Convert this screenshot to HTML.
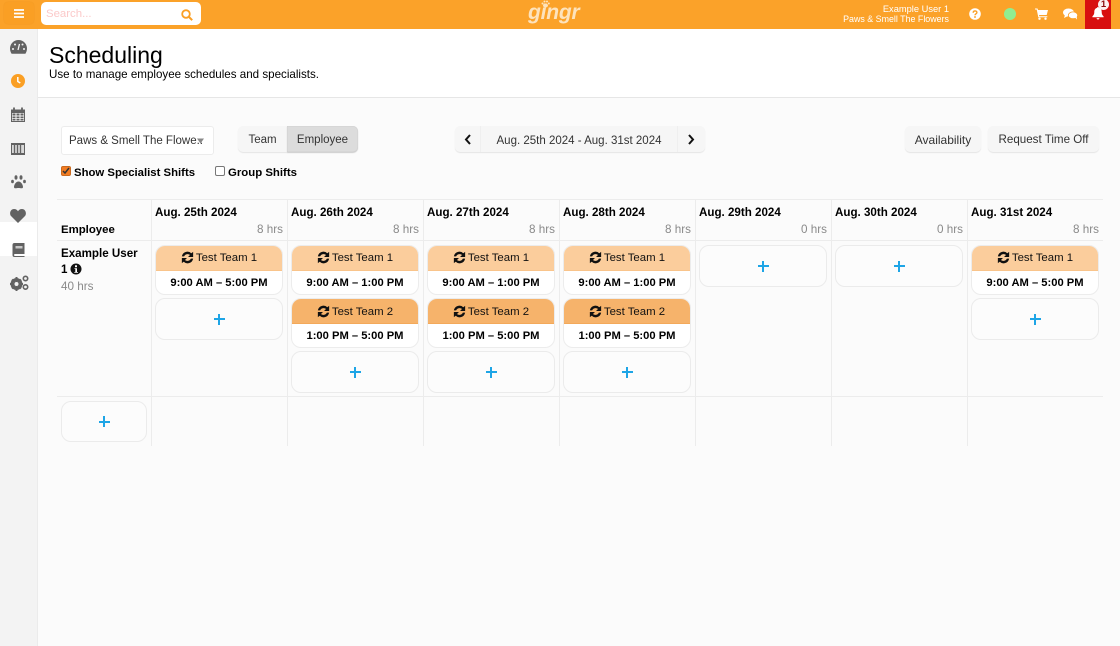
<!DOCTYPE html>
<html><head><meta charset="utf-8"><style>
html,body{margin:0;padding:0}
body{width:1120px;height:646px;overflow:hidden;position:relative;background:#fbfbfb;font-family:"Liberation Sans",sans-serif;color:#000}
.a{position:absolute;white-space:nowrap}
.t{position:absolute;white-space:nowrap;line-height:16px;height:16px;font-size:11.6px}
.b{font-weight:700;font-size:11.6px}
.g{color:#8a8a8a;font-size:11.7px}
.c{text-align:center}
.line{position:absolute;background:#ececec}
.card{position:absolute;width:126px;height:48px;border:1px solid #ececec;border-radius:10px;background:#fff;overflow:hidden;box-sizing:content-box}
.card .h{position:absolute;left:0;top:0;right:0;height:24px;text-align:center;line-height:24px;font-size:11.4px;color:#111}
.h1{background:#fbcd9c;border-bottom:1px solid #f9c48b}
.h2{background:#f6b36b;border-bottom:1px solid #f3a95a}
.h2.h{line-height:26px !important}
.card .h svg{vertical-align:-3px;margin-right:2px}
.card .time{position:absolute;left:0;right:0;top:26px;height:23px;line-height:23px;text-align:center;font-weight:700;font-size:11.2px}
.add{position:absolute;border:1px solid #ebebeb;border-radius:10px;background:#fcfcfc;box-sizing:border-box}
.add:after,.add:before{content:"";position:absolute;background:#1ea5e6;left:50%;top:50%}
.add:before{width:11px;height:2px;margin:-1px 0 0 -5.5px}
.add:after{width:2px;height:11px;margin:-5.5px 0 0 -1px}
.btn{position:absolute;background:#f6f6f6;border-radius:5px;box-shadow:0 1px 1px #e5e5e5;height:26px;line-height:28px;text-align:center;font-size:11.5px;color:#333}
</style></head><body>

<!-- top bar -->
<div class="a" style="left:0;top:0;width:1120px;height:29px;background:#fba229"></div>
<div class="a" style="left:4px;top:2px;width:30px;height:22px;border-radius:4px;background:#fa9f24;box-shadow:0 0 1px #e8921f"></div>
<svg class="a" style="left:14px;top:9px" width="10" height="9"><path d="M0 1h10M0 4.500h10M0 8h10" stroke="#fff" stroke-width="1.700"/></svg>
<div class="a" style="left:41px;top:2px;width:160px;height:23px;background:#fff;border-radius:5px"></div>
<div class="t" style="left:46px;top:6px;color:#fbc9c9;font-size:11.4px">Search...</div>
<svg class="a" style="left:181px;top:9px" width="12" height="12" viewBox="0 0 12 12"><circle cx="5" cy="5" r="3.800" fill="none" stroke="#fa9f24" stroke-width="1.800"/><path d="M8 8l3.200 3.200" stroke="#fa9f24" stroke-width="2"/></svg>

<!-- logo -->
<div class="a" style="left:528px;top:0;font-family:'Liberation Sans',sans-serif;font-style:italic;font-weight:700;font-size:21px;line-height:26px;color:#fde3bd;letter-spacing:-.2px">gingr</div>
<svg class="a" style="left:541px;top:0" width="9" height="8" viewBox="0 0 9 8" fill="#fde3bd"><ellipse cx="4.500" cy="5.500" rx="2.500" ry="2"/><circle cx="1.500" cy="3.500" r="1"/><circle cx="3.500" cy="1.500" r="1"/><circle cx="6" cy="1.500" r="1"/><circle cx="7.800" cy="3.500" r="1"/></svg>

<div class="t" style="right:171px;top:1px;color:#fff;font-size:9.3px">Example User 1</div>
<div class="t" style="right:171px;top:11px;color:#fff;font-size:8.9px">Paws &amp; Smell The Flowers</div>
<svg class="a" style="left:969px;top:8px" width="12" height="12" viewBox="0 0 12 12"><circle cx="6" cy="6" r="5.800" fill="#fff"/><path d="M4.200 4.700c0-2.300 3.700-2.300 3.700-.2 0 1.400-1.900 1.300-1.900 2.800" fill="none" stroke="#fa9f24" stroke-width="1.400"/><rect x="5.200" y="8.200" width="1.600" height="1.600" fill="#fa9f24"/></svg>
<div class="a" style="left:1004px;top:8px;width:12px;height:12px;border-radius:50%;background:#90ee90"></div>
<svg class="a" style="left:1035px;top:8px" width="13" height="12" viewBox="0 0 13 12"><path d="M0 .5h2.500l.5 1.500h10l-1.300 5H4l.3 1.200h8v1H3.300L1.700 1.500H0z" fill="#fff"/><circle cx="4.500" cy="10.700" r="1.200" fill="#fff"/><circle cx="10.500" cy="10.700" r="1.200" fill="#fff"/></svg>
<svg class="a" style="left:1063px;top:8px" width="15" height="12" viewBox="0 0 15 12"><ellipse cx="5.500" cy="4.500" rx="5.500" ry="4" fill="#fff"/><path d="M2 7l-1 3 4-2z" fill="#fff"/><ellipse cx="10" cy="7.300" rx="4.700" ry="3.400" fill="#fff" stroke="#fa9f24" stroke-width=".8"/><path d="M12 9.500l2 2-.3-3.500z" fill="#fff"/></svg>
<div class="a" style="left:1085px;top:0;width:26px;height:29px;background:#d80f0f"></div>
<svg class="a" style="left:1092px;top:7px" width="12" height="13" viewBox="0 0 12 14"><path d="M6 0c.6 0 1 .4 1 1 2.300.5 3 2.500 3 4.500 0 2.500 1 3.500 2 4.500v1H0v-1c1-1 2-2 2-4.500C2 3.500 2.700 1.500 5 1c0-.6.400-1 1-1z" fill="#fff"/><path d="M4.500 12h3a1.500 1.500 0 0 1-3 0z" fill="#fff"/></svg>
<div class="a" style="left:1098px;top:-1px;width:11px;height:11px;border-radius:50%;background:#fbeeee;color:#8a0c0c;font-size:9.500px;font-weight:700;line-height:11px;text-align:center">1</div>

<!-- sidebar -->
<div class="a" style="left:0;top:29px;width:37px;height:617px;background:#f3f3f3;border-right:1px solid #ebebeb"></div>
<div class="a" style="left:0;top:222px;width:37px;height:34px;background:#fff"></div>
<svg class="a" style="left:10px;top:40px" width="17" height="14" viewBox="0 0 17 14"><path d="M8.500 0a8.500 8.500 0 0 1 8.500 8.500c0 2-.7 3.800-1.600 5.200H1.600C.7 12.300 0 10.500 0 8.500A8.500 8.500 0 0 1 8.500 0z" fill="#626262"/><path d="M8 10l1.500-6" stroke="#f3f3f3" stroke-width="1.300"/><g fill="#f3f3f3"><circle cx="3" cy="9" r="1"/><circle cx="5" cy="4.500" r="1"/><circle cx="12.500" cy="4.500" r="1"/><circle cx="14" cy="9" r="1"/></g></svg>
<svg class="a" style="left:11px;top:74px" width="14" height="14" viewBox="0 0 14 14"><circle cx="7" cy="7" r="7" fill="#fa9f24"/><path d="M6.800 3v4.500l2.500 1.500" fill="none" stroke="#fff" stroke-width="1.500"/></svg>
<svg class="a" style="left:11px;top:107px" width="14" height="15" viewBox="0 0 14 15"><path d="M0 2.500h14V15H0z" fill="#626262"/><path d="M3 .5v3M11 .5v3" stroke="#626262" stroke-width="1.800"/><path d="M1 6h12v8H1z" fill="#f3f3f3"/><path d="M1.500 6.500h3v2h-3zM5.500 6.500h3v2h-3zM9.500 6.500h3v2h-3zM1.500 9.500h3v1.800h-3zM5.500 9.500h3v1.800h-3zM9.500 9.500h3v1.800h-3zM1.500 12h3v1.500h-3zM5.500 12h3v1.500h-3zM9.500 12h3v1.500h-3z" fill="#626262"/></svg>
<svg class="a" style="left:11px;top:143px" width="14" height="12" viewBox="0 0 14 12"><rect width="14" height="12" fill="#626262"/><rect x="1" y="2" width="12" height="8" fill="#d8d8d8"/><path d="M3.500 2v8M6.500 2v8M9.500 2v8" stroke="#626262" stroke-width="1.300"/></svg>
<svg class="a" style="left:11px;top:175px" width="15" height="14" viewBox="0 0 15 14" fill="#626262"><path d="M7.500 6.500c2.500 0 4.500 3.300 4.500 5.500 0 2-2.500 1-4.500 1s-4.500 1-4.500-1c0-2.200 2-5.500 4.500-5.500z"/><ellipse cx="1.500" cy="6.500" rx="1.400" ry="1.800"/><ellipse cx="5" cy="2.500" rx="1.500" ry="2.200"/><ellipse cx="10" cy="2.500" rx="1.500" ry="2.200"/><ellipse cx="13.500" cy="6.500" rx="1.400" ry="1.800"/></svg>
<svg class="a" style="left:10px;top:209px" width="16" height="14" viewBox="0 0 16 14"><path d="M8 14L1 7C-1 4.500.5 0 4 0c2 0 3.200 1 4 2.200C8.800 1 10 0 12 0c3.500 0 5 4.500 3 7z" fill="#626262"/></svg>
<svg class="a" style="left:12px;top:243px" width="13" height="14" viewBox="0 0 12 14"><path d="M2 0h10v11H2.500a1 1 0 0 0 0 2H12v1H2a2 2 0 0 1-2-2V2a2 2 0 0 1 2-2z" fill="#626262"/><rect x="3" y="3" width="7" height="2.500" fill="#c8c8c8"/></svg>
<svg class="a" style="left:10px;top:275px" width="19" height="16" viewBox="0 0 19 16"><circle cx="6.500" cy="9" r="4.500" fill="none" stroke="#626262" stroke-width="3"/><path d="M6.500 2v14M0 9h13M2 4.500l9 9M11 4.500l-9 9" stroke="#626262" stroke-width="2"/><circle cx="6.500" cy="9" r="2" fill="#f3f3f3"/><circle cx="15.500" cy="3.500" r="2.200" fill="none" stroke="#626262" stroke-width="1.600"/><circle cx="15.500" cy="12" r="2.200" fill="none" stroke="#626262" stroke-width="1.600"/></svg>

<!-- header -->
<div class="a" style="left:38px;top:29px;width:1082px;height:68px;background:#fff;border-bottom:1px solid #e6e6e6"></div>
<div class="a" style="left:49px;top:39px;font-size:23px;line-height:32px">Scheduling</div>
<div class="t" style="left:49px;top:67px;font-size:11.600px">Use to manage employee schedules and specialists.</div>

<!-- controls -->
<div class="a" style="left:61px;top:126px;width:153px;height:29px;box-sizing:border-box;background:#fff;border:1px solid #ececec;border-radius:3px"></div>
<div class="t" style="left:69px;top:133px;color:#333;font-size:11.500px">Paws &amp; Smell The Flowe..</div>
<svg class="a" style="left:197px;top:138px" width="7" height="6"><path d="M0 .5h7L3.500 5.500z" fill="#888"/></svg>

<div class="btn" style="left:238px;top:126px;width:49px;border-radius:5px 0 0 5px">Team</div>
<div class="btn" style="left:287px;top:126px;width:71px;border-radius:0 5px 5px 0;background:#dcdcdc;box-shadow:0 1px 1px #ccc,inset 0 0 1px #bbb">Employee</div>

<div class="btn" style="left:455px;top:126px;width:250px"></div>
<div class="line" style="left:480px;top:126px;width:1px;height:26px;background:#efefef"></div>
<div class="line" style="left:677px;top:126px;width:1px;height:26px;background:#efefef"></div>
<div class="t c" style="left:481px;top:133px;width:196px;color:#333;font-size:11.500px">Aug. 25th 2024 - Aug. 31st 2024</div>
<svg class="a" style="left:464px;top:134px" width="8" height="11"><path d="M6 1L2 5.500 6 10" fill="none" stroke="#111" stroke-width="2"/></svg>
<svg class="a" style="left:687px;top:134px" width="8" height="11"><path d="M2 1l4 4.500L2 10" fill="none" stroke="#111" stroke-width="2"/></svg>

<div class="btn" style="left:905px;top:126px;width:76px;font-size:12px">Availability</div>
<div class="btn" style="left:988px;top:126px;width:111px;font-size:11.600px">Request Time Off</div>

<div class="a" style="left:61px;top:166px;width:10px;height:10px;background:#f27c22;border:1px solid #c96a1f;box-sizing:border-box;border-radius:2px"></div>
<svg class="a" style="left:62px;top:167px" width="8" height="8"><path d="M1 4l2 2 4-5" fill="none" stroke="#333" stroke-width="1.500"/></svg>
<div class="t b" style="left:74px;top:165px;font-size:11.350px">Show Specialist Shifts</div>
<div class="a" style="left:215px;top:166px;width:10px;height:10px;background:#fff;border:1px solid #777;box-sizing:border-box;border-radius:2px"></div>
<div class="t b" style="left:228px;top:165px;font-size:11.400px">Group Shifts</div>

<!-- grid -->
<div class="line" style="left:57px;top:199px;width:1046px;height:1px"></div>
<div class="line" style="left:57px;top:240px;width:1046px;height:1px"></div>
<div class="line" style="left:57px;top:396px;width:1046px;height:1px"></div>
<div class="line" style="left:151px;top:199px;width:1px;height:247px"></div>
<div class="line" style="left:287px;top:199px;width:1px;height:247px"></div>
<div class="line" style="left:423px;top:199px;width:1px;height:247px"></div>
<div class="line" style="left:559px;top:199px;width:1px;height:247px"></div>
<div class="line" style="left:695px;top:199px;width:1px;height:247px"></div>
<div class="line" style="left:831px;top:199px;width:1px;height:247px"></div>
<div class="line" style="left:967px;top:199px;width:1px;height:247px"></div>

<div class="t b" style="left:61px;top:222px;font-size:11.400px">Employee</div>
<div class="t b" style="left:155px;top:205px">Aug. 25th 2024</div>
<div class="t b" style="left:291px;top:205px">Aug. 26th 2024</div>
<div class="t b" style="left:427px;top:205px">Aug. 27th 2024</div>
<div class="t b" style="left:563px;top:205px">Aug. 28th 2024</div>
<div class="t b" style="left:699px;top:205px">Aug. 29th 2024</div>
<div class="t b" style="left:835px;top:205px">Aug. 30th 2024</div>
<div class="t b" style="left:971px;top:205px">Aug. 31st 2024</div>

<div class="t g" style="right:837px;top:222px">8 hrs</div>
<div class="t g" style="right:701px;top:222px">8 hrs</div>
<div class="t g" style="right:565px;top:222px">8 hrs</div>
<div class="t g" style="right:429px;top:222px">8 hrs</div>
<div class="t g" style="right:293px;top:222px">0 hrs</div>
<div class="t g" style="right:157px;top:222px">0 hrs</div>
<div class="t g" style="right:21px;top:222px">8 hrs</div>

<div class="t b" style="left:61px;top:246px">Example User</div>
<div class="t b" style="left:61px;top:262px">1</div>
<svg class="a" style="left:70px;top:263px" width="12" height="12" viewBox="0 0 12 12"><circle cx="6" cy="6" r="5.500" fill="#111"/><rect x="5" y="2.300" width="2" height="1.900" fill="#fff"/><path d="M4.500 5.200H7V9h1v.8H4.300V9h1V6h-.8z" fill="#fff"/></svg>
<div class="t g" style="left:61px;top:279px">40 hrs</div>

<!-- col 1 -->
<div class="card" style="left:155px;top:245px"><div class="h h1"><svg width="13" height="13" viewBox="0 0 12 12"><path d="M.8 5a5.200 5.200 0 0 1 8.700-2.900L11.200.8v4.700H6.500l1.800-1.800A3.400 3.400 0 0 0 2.900 5zM11.200 7a5.200 5.200 0 0 1-8.700 2.900L.8 11.200V6.500h4.700L3.700 8.300A3.400 3.400 0 0 0 9.100 7z" fill="#111"/></svg>Test Team 1</div><div class="time">9:00 AM – 5:00 PM</div></div>
<div class="add" style="left:155px;top:298px;width:128px;height:42px"></div>

<!-- col 2 -->
<div class="card" style="left:291px;top:245px"><div class="h h1"><svg width="13" height="13" viewBox="0 0 12 12"><path d="M.8 5a5.200 5.200 0 0 1 8.700-2.900L11.200.8v4.700H6.500l1.800-1.800A3.400 3.400 0 0 0 2.900 5zM11.200 7a5.200 5.200 0 0 1-8.700 2.900L.8 11.200V6.500h4.700L3.700 8.300A3.400 3.400 0 0 0 9.100 7z" fill="#111"/></svg>Test Team 1</div><div class="time">9:00 AM – 1:00 PM</div></div>
<div class="card" style="left:291px;top:298px"><div class="h h2"><svg width="13" height="13" viewBox="0 0 12 12"><path d="M.8 5a5.200 5.200 0 0 1 8.700-2.900L11.200.8v4.700H6.500l1.800-1.800A3.400 3.400 0 0 0 2.900 5zM11.200 7a5.200 5.200 0 0 1-8.700 2.900L.8 11.200V6.500h4.700L3.700 8.300A3.400 3.400 0 0 0 9.100 7z" fill="#111"/></svg>Test Team 2</div><div class="time">1:00 PM – 5:00 PM</div></div>
<div class="add" style="left:291px;top:351px;width:128px;height:42px"></div>

<!-- col 3 -->
<div class="card" style="left:427px;top:245px"><div class="h h1"><svg width="13" height="13" viewBox="0 0 12 12"><path d="M.8 5a5.200 5.200 0 0 1 8.700-2.900L11.200.8v4.700H6.500l1.800-1.800A3.400 3.400 0 0 0 2.900 5zM11.200 7a5.200 5.200 0 0 1-8.700 2.900L.8 11.200V6.500h4.700L3.700 8.300A3.400 3.400 0 0 0 9.100 7z" fill="#111"/></svg>Test Team 1</div><div class="time">9:00 AM – 1:00 PM</div></div>
<div class="card" style="left:427px;top:298px"><div class="h h2"><svg width="13" height="13" viewBox="0 0 12 12"><path d="M.8 5a5.200 5.200 0 0 1 8.700-2.900L11.200.8v4.700H6.500l1.800-1.800A3.400 3.400 0 0 0 2.900 5zM11.200 7a5.200 5.200 0 0 1-8.700 2.900L.8 11.200V6.500h4.700L3.700 8.300A3.400 3.400 0 0 0 9.100 7z" fill="#111"/></svg>Test Team 2</div><div class="time">1:00 PM – 5:00 PM</div></div>
<div class="add" style="left:427px;top:351px;width:128px;height:42px"></div>

<!-- col 4 -->
<div class="card" style="left:563px;top:245px"><div class="h h1"><svg width="13" height="13" viewBox="0 0 12 12"><path d="M.8 5a5.200 5.200 0 0 1 8.700-2.900L11.200.8v4.700H6.500l1.800-1.800A3.400 3.400 0 0 0 2.900 5zM11.200 7a5.200 5.200 0 0 1-8.700 2.900L.8 11.200V6.500h4.700L3.700 8.300A3.400 3.400 0 0 0 9.100 7z" fill="#111"/></svg>Test Team 1</div><div class="time">9:00 AM – 1:00 PM</div></div>
<div class="card" style="left:563px;top:298px"><div class="h h2"><svg width="13" height="13" viewBox="0 0 12 12"><path d="M.8 5a5.200 5.200 0 0 1 8.700-2.900L11.200.8v4.700H6.500l1.800-1.800A3.400 3.400 0 0 0 2.900 5zM11.200 7a5.200 5.200 0 0 1-8.700 2.900L.8 11.200V6.500h4.700L3.700 8.300A3.400 3.400 0 0 0 9.100 7z" fill="#111"/></svg>Test Team 2</div><div class="time">1:00 PM – 5:00 PM</div></div>
<div class="add" style="left:563px;top:351px;width:128px;height:42px"></div>

<!-- col 5,6 -->
<div class="add" style="left:699px;top:245px;width:128px;height:42px"></div>
<div class="add" style="left:835px;top:245px;width:128px;height:42px"></div>

<!-- col 7 -->
<div class="card" style="left:971px;top:245px"><div class="h h1"><svg width="13" height="13" viewBox="0 0 12 12"><path d="M.8 5a5.200 5.200 0 0 1 8.700-2.900L11.200.8v4.700H6.500l1.800-1.800A3.400 3.400 0 0 0 2.900 5zM11.200 7a5.200 5.200 0 0 1-8.700 2.900L.8 11.200V6.500h4.700L3.700 8.300A3.400 3.400 0 0 0 9.100 7z" fill="#111"/></svg>Test Team 1</div><div class="time">9:00 AM – 5:00 PM</div></div>
<div class="add" style="left:971px;top:298px;width:128px;height:42px"></div>

<div class="add" style="left:61px;top:401px;width:86px;height:41px"></div>
</body></html>
